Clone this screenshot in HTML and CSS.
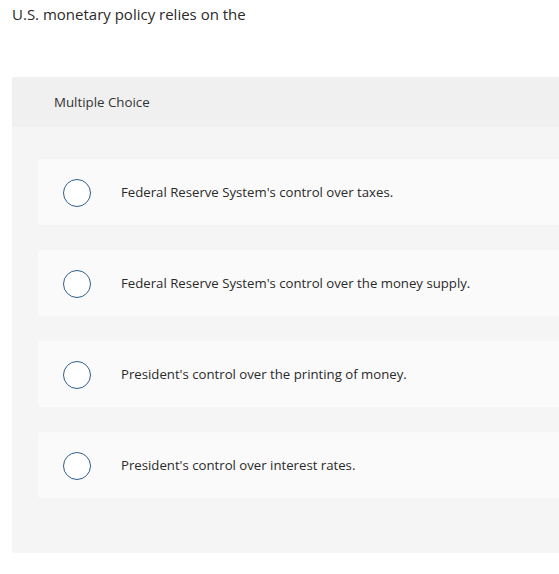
FILE: index.html
```html
<!DOCTYPE html>
<html>
<head>
<meta charset="utf-8">
<link rel="stylesheet" href="styles.css">
</head>
<body>
<div class="prompt">U.S. monetary policy relies on the</div>
<div class="panel">
  <div class="panel-head">Multiple Choice</div>
  <div class="panel-body">
    <div class="option"><span class="radio"></span><span class="label">Federal Reserve System's control over taxes.</span></div>
    <div class="option"><span class="radio"></span><span class="label">Federal Reserve System's control over the money supply.</span></div>
    <div class="option"><span class="radio"></span><span class="label">President's control over the printing of money.</span></div>
    <div class="option"><span class="radio"></span><span class="label">President's control over interest rates.</span></div>
  </div>
</div>
</body>
</html>
```
FILE: styles.css
```css
html, body {
  margin: 0;
  padding: 0;
  background: #ffffff;
}
body {
  font-family: "Open Sans", Lato, sans-serif;
  color: #2a2a2a;
}
.prompt {
  font-size: 15px;
  line-height: 18px;
  padding: 5px 0 0 12px;
  height: 77px;
  box-sizing: border-box;
}
.panel {
  margin-left: 12px;
  background: #f5f5f5;
  border-radius: 3px 0 0 3px;
  overflow: hidden;
}
.panel-head {
  background: #f0f0f0;
  height: 50px;
  padding-left: 42px;
  display: flex;
  align-items: center;
  font-size: 13.3px;
  color: #333333;
}
.panel-body {
  padding: 32px 0 55px 26px;
  display: flex;
  flex-direction: column;
  gap: 25px;
}
.option {
  background: #fafafa;
  height: 66px;
  border-radius: 3px 0 0 3px;
  display: flex;
  align-items: center;
  padding-left: 25px;
}
.radio {
  width: 26px;
  height: 26px;
  border: 1.5px solid #2f5f8f;
  border-radius: 50%;
  background: #ffffff;
  flex: none;
  margin-top: 1px;
}
.label {
  margin-left: 30px;
  font-size: 13.2px;
  color: #2a2a2a;
}
```
